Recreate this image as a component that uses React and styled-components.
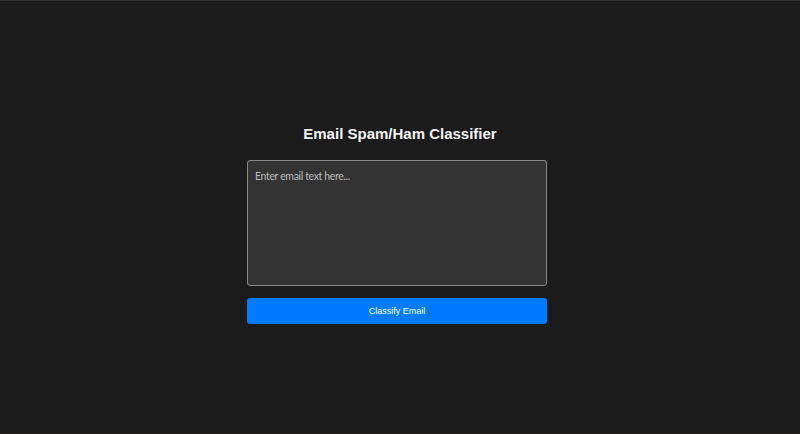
import React from "react";
import styled, { createGlobalStyle } from "styled-components";

const GlobalStyle = createGlobalStyle`
  html, body {
    margin: 0;
    padding: 0;
    background-color: #1b1b1b;
  }
`;

const Page = styled.div`
  box-sizing: border-box;
  height: 434px;
  display: flex;
  flex-direction: column;
  align-items: center;
  justify-content: center;
  background-color: #1b1b1b;
  border-top: 1px solid #333333;
  border-bottom: 1px solid #2a2a22;
  font-family: "Liberation Sans", Arial, sans-serif;
`;

// card is a bit wider than its fields, so the title sits 3px right of them
const Card = styled.div`
  width: 306px;
  display: flex;
  flex-direction: column;
  align-items: flex-start;
  margin-top: 14px;
`;

const Title = styled.h1`
  align-self: stretch;
  margin: 0 0 18px;
  font-size: 15px;
  font-weight: bold;
  color: #f4f4f4;
  text-align: center;
`;

const EmailInput = styled.textarea`
  box-sizing: border-box;
  width: 300px;
  height: 126px;
  padding: 9px 7px;
  border: 1px solid #8a8a8a;
  border-radius: 3px;
  background-color: #333333;
  color: #e0e0e0;
  font-family: Lato, "Open Sans", sans-serif;
  font-size: 10.5px;
  letter-spacing: -0.35px;
  resize: none;
  outline: none;

  &::placeholder {
    color: #bcbcbc;
  }
`;

const ClassifyButton = styled.button`
  width: 300px;
  margin-top: 12px;
  height: 26px;
  border: none;
  border-radius: 3px;
  background-color: #007bff;
  color: #ffffff;
  font-family: "Liberation Sans", Arial, sans-serif;
  font-size: 9px;
  cursor: pointer;
`;

export default function App() {
  return (
    <>
      <GlobalStyle />
      <Page>
        <Card>
          <Title>Email Spam/Ham Classifier</Title>
          <EmailInput placeholder="Enter email text here..." />
          <ClassifyButton>Classify Email</ClassifyButton>
        </Card>
      </Page>
    </>
  );
}
